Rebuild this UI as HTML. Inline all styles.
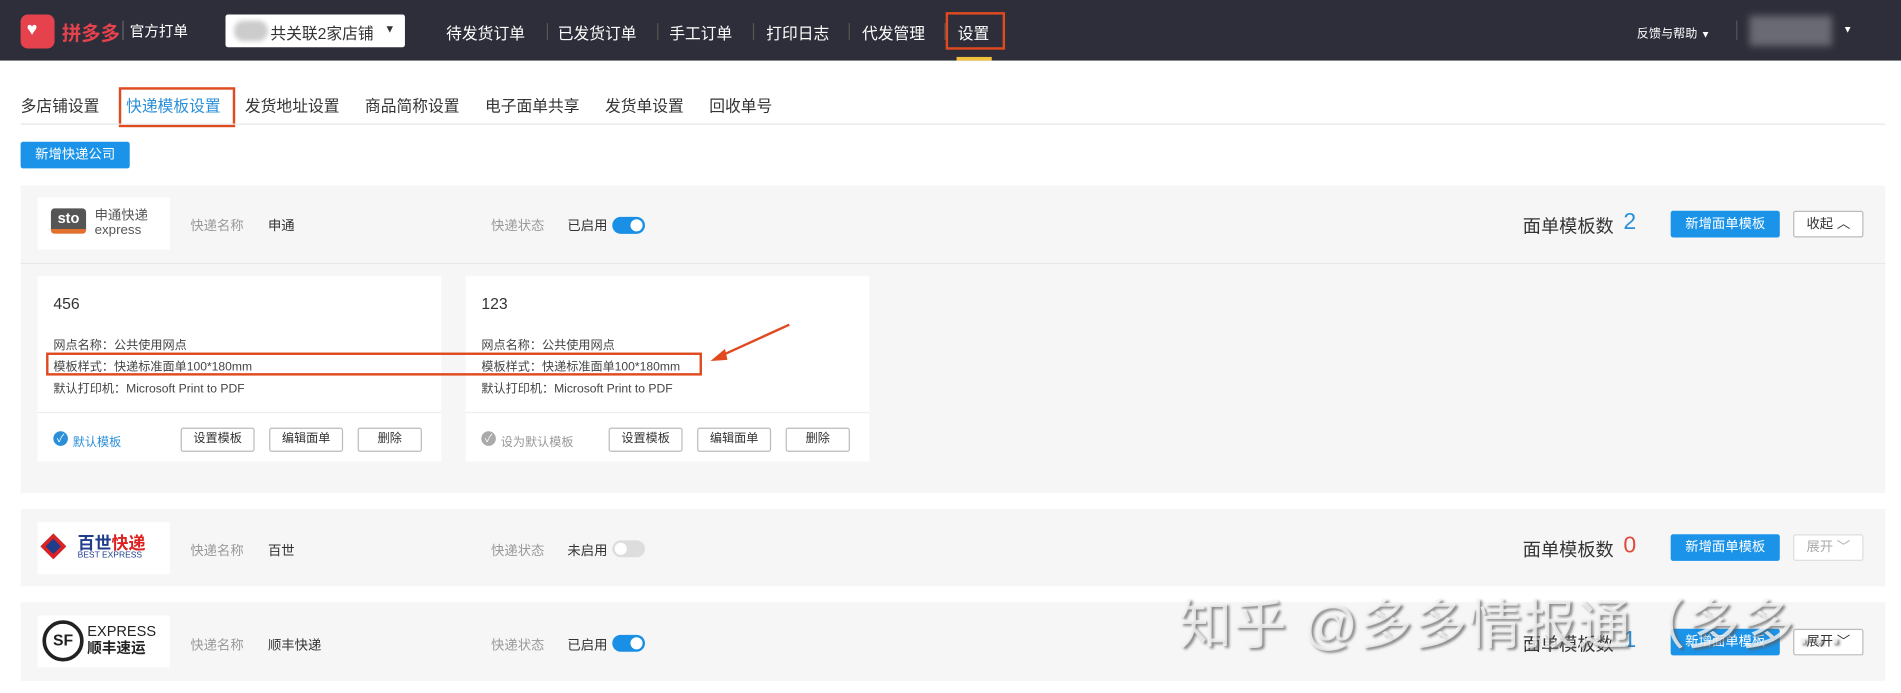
<!DOCTYPE html>
<html><head><meta charset="utf-8">
<style>
*{margin:0;padding:0;box-sizing:border-box}
html,body{width:1901px;height:693px;overflow:hidden;background:#fff}
body{font-family:"Liberation Sans","Noto Sans CJK SC",sans-serif;color:#333}
#w{position:absolute;left:0;top:0;width:1568px;height:572px;transform:scale(1.2124,1.2115);transform-origin:0 0}
.a{position:absolute;white-space:nowrap}
.hd{left:0;top:0;width:1568px;height:50px;background:#2e2e3a}
.nav{top:17px;font-size:13px;color:#fff}
.tab{top:77px;font-size:13px;color:#333}
.sec{left:17px;width:1538px;background:#f6f6f6}
.lg{background:#fff}
.lbl{font-size:11px;color:#999}
.val{font-size:11px;color:#333}
.tog{width:27px;height:14px;border-radius:7px;background:#1a8fe6}
.tog:after{content:"";position:absolute;right:2px;top:2px;width:10px;height:10px;border-radius:50%;background:#fff}
.tog.off{background:#ddd}.tog.off:after{left:2px;right:auto}
.bb{background:#1a93e8;color:#fff;font-size:11px;text-align:center;border-radius:2px}
.wb{background:#fff;border:1px solid #bbb;font-size:11px;text-align:center;color:#333;border-radius:2px}
.card{background:#fff;width:333px;height:153px}
.ln{font-size:10px;color:#444}
</style></head><body><div id="w">
<div class="a hd"></div>
<div class="a" style="left:17px;top:12px;width:28px;height:28px;background:#e5424d;border-radius:6px"></div>
<div class="a" style="left:22px;top:17px;width:18px;height:16px;color:#fff;font-size:15px;line-height:16px">♥</div>
<div class="a" style="left:51px;top:14px;font-size:16px;font-weight:bold;color:#e5424d">拼多多</div>
<div class="a" style="left:101px;top:17px;width:1px;height:16px;background:#666"></div>
<div class="a" style="left:107px;top:17px;font-size:12px;color:#fff">官方打单</div>
<div class="a" style="left:186px;top:12px;width:148px;height:27px;background:#fff;border-radius:2px"></div>
<div class="a" style="left:193px;top:17px;width:28px;height:17px;background:#ccc;border-radius:8px;filter:blur(2px)"></div>
<div class="a" style="left:223px;top:17px;font-size:13px;color:#333">共关联2家店铺</div>
<div class="a" style="left:317px;top:19px;font-size:9px;color:#333">▼</div>
<div class="a nav" style="left:368px">待发货订单</div>
<div class="a nav" style="left:460px">已发货订单</div>
<div class="a nav" style="left:552px">手工订单</div>
<div class="a nav" style="left:632px">打印日志</div>
<div class="a nav" style="left:711px">代发管理</div>
<div class="a nav" style="left:790px">设置</div>
<div class="a" style="left:451px;top:19px;width:1px;height:14px;background:#555"></div>
<div class="a" style="left:542px;top:19px;width:1px;height:14px;background:#555"></div>
<div class="a" style="left:621px;top:19px;width:1px;height:14px;background:#555"></div>
<div class="a" style="left:700px;top:19px;width:1px;height:14px;background:#555"></div>
<div class="a" style="left:779px;top:19px;width:1px;height:14px;background:#555"></div>
<div class="a" style="left:780px;top:10px;width:49px;height:31px;border:2px solid #e04a1f"></div>
<div class="a" style="left:789px;top:47px;width:29px;height:3px;background:#f3c23d"></div>
<div class="a" style="left:1350px;top:19px;font-size:10px;color:#fff">反馈与帮助 <span style="font-size:8px">▼</span></div>
<div class="a" style="left:1432px;top:17px;width:1px;height:16px;background:#555"></div>
<div class="a" style="left:1443px;top:13px;width:68px;height:25px;background:#6a6a74;filter:blur(3px)"></div>
<div class="a" style="left:1520px;top:20px;font-size:8px;color:#fff">▼</div>

<div class="a tab" style="left:17px">多店铺设置</div>
<div class="a tab" style="left:104px;color:#2a8fd8">快递模板设置</div>
<div class="a tab" style="left:202px">发货地址设置</div>
<div class="a tab" style="left:301px">商品简称设置</div>
<div class="a tab" style="left:400px">电子面单共享</div>
<div class="a tab" style="left:499px">发货单设置</div>
<div class="a tab" style="left:585px">回收单号</div>
<div class="a" style="left:98px;top:72px;width:96px;height:33px;border:2px solid #e04a1f"></div>
<div class="a" style="left:17px;top:102px;width:1538px;height:1px;background:#e6e6e6"></div>
<div class="a bb" style="left:17px;top:117px;width:90px;height:22px;line-height:22px">新增快递公司</div>

<div class="a sec" style="top:153px;height:254px"></div>
<div class="a" style="left:17px;top:217px;width:1538px;height:1px;background:#e8e8e8"></div>
<div class="a lg" style="left:31px;top:163px;width:109px;height:43px"></div>
<div class="a" style="left:42px;top:172px;width:29px;height:21px;background:#555;border-radius:3px;border-bottom:4px solid #e2702d;color:#fff;font-size:12px;font-weight:bold;text-align:center;line-height:16px">sto</div>
<div class="a" style="left:78px;top:172px;font-size:11px;color:#555;line-height:12px">申通快递<br><span style="font-size:11px">express</span></div>
<div class="a lbl" style="left:157px;top:178px">快递名称</div>
<div class="a val" style="left:221px;top:178px">申通</div>
<div class="a lbl" style="left:405px;top:178px">快递状态</div>
<div class="a val" style="left:468px;top:178px">已启用</div>
<div class="a tog" style="left:505px;top:179px"></div>
<div class="a" style="left:1256px;top:176px;font-size:15px;color:#333">面单模板数</div>
<div class="a" style="left:1339px;top:173px;font-size:19px;color:#2a8fd8">2</div>
<div class="a bb" style="left:1378px;top:174px;width:90px;height:22px;line-height:22px">新增面单模板</div>
<div class="a wb" style="left:1479px;top:174px;width:58px;height:22px;line-height:20px">收起 ︿</div>

<div class="a card" style="left:31px;top:228px"></div>
<div class="a card" style="left:384px;top:228px"></div>
<div class="a" style="left:31px;top:340px;width:333px;height:1px;background:#eee"></div>
<div class="a" style="left:384px;top:340px;width:333px;height:1px;background:#eee"></div>
<div class="a" style="left:44px;top:243px;font-size:13px;color:#333">456</div>
<div class="a" style="left:397px;top:243px;font-size:13px;color:#333">123</div>
<div class="a ln" style="left:44px;top:276px">网点名称：公共使用网点</div>
<div class="a ln" style="left:44px;top:294px">模板样式：快递标准面单100*180mm</div>
<div class="a ln" style="left:44px;top:312px">默认打印机：Microsoft Print to PDF</div>
<div class="a ln" style="left:397px;top:276px">网点名称：公共使用网点</div>
<div class="a ln" style="left:397px;top:294px">模板样式：快递标准面单100*180mm</div>
<div class="a ln" style="left:397px;top:312px">默认打印机：Microsoft Print to PDF</div>
<div class="a" style="left:38px;top:291px;width:541px;height:19px;border:2px solid #e04a1f"></div>
<svg class="a" style="left:580px;top:262px" width="80" height="42"><line x1="71" y1="6" x2="14" y2="32" stroke="#e04a1f" stroke-width="2"/><polygon points="6,36 18,26 20,35" fill="#e04a1f"/></svg>
<div class="a" style="left:44px;top:356px;width:12px;height:12px;border-radius:50%;background:#2a8fd8;color:#fff;font-size:9px;text-align:center;line-height:12px">✓</div>
<div class="a" style="left:60px;top:356px;font-size:10px;color:#2a8fd8">默认模板</div>
<div class="a" style="left:397px;top:356px;width:12px;height:12px;border-radius:50%;background:#aaa;color:#fff;font-size:9px;text-align:center;line-height:12px">✓</div>
<div class="a" style="left:413px;top:356px;font-size:10px;color:#999">设为默认模板</div>
<div class="a wb" style="left:149px;top:353px;width:61px;height:20px;line-height:18px;font-size:10px">设置模板</div>
<div class="a wb" style="left:222px;top:353px;width:61px;height:20px;line-height:18px;font-size:10px">编辑面单</div>
<div class="a wb" style="left:295px;top:353px;width:53px;height:20px;line-height:18px;font-size:10px">删除</div>
<div class="a wb" style="left:502px;top:353px;width:61px;height:20px;line-height:18px;font-size:10px">设置模板</div>
<div class="a wb" style="left:575px;top:353px;width:61px;height:20px;line-height:18px;font-size:10px">编辑面单</div>
<div class="a wb" style="left:648px;top:353px;width:53px;height:20px;line-height:18px;font-size:10px">删除</div>

<div class="a sec" style="top:420px;height:64px"></div>
<div class="a lg" style="left:31px;top:431px;width:109px;height:43px"></div>
<div class="a" style="left:34px;top:441px;width:20px;height:20px;background:#1f3d8a;transform:rotate(45deg) scale(.75);border:4px solid #d22"></div>
<div class="a" style="left:64px;top:438px;font-size:14px;color:#1f3d8a;font-weight:bold">百世<span style="color:#d22">快递</span></div>
<div class="a" style="left:64px;top:455px;font-size:7px;color:#1f3d8a">BEST EXPRESS</div>
<div class="a lbl" style="left:157px;top:446px">快递名称</div>
<div class="a val" style="left:221px;top:446px">百世</div>
<div class="a lbl" style="left:405px;top:446px">快递状态</div>
<div class="a val" style="left:468px;top:446px">未启用</div>
<div class="a tog off" style="left:505px;top:446px"></div>
<div class="a" style="left:1256px;top:443px;font-size:15px;color:#333">面单模板数</div>
<div class="a" style="left:1339px;top:440px;font-size:19px;color:#e04a3a">0</div>
<div class="a bb" style="left:1378px;top:441px;width:90px;height:22px;line-height:22px">新增面单模板</div>
<div class="a wb" style="left:1479px;top:441px;width:58px;height:22px;line-height:20px;color:#aaa;border-color:#ddd">展开 ﹀</div>

<div class="a sec" style="top:497px;height:65px"></div>
<div class="a lg" style="left:31px;top:508px;width:109px;height:43px"></div>
<div class="a" style="left:35px;top:512px;width:34px;height:34px;border:3px solid #222;border-radius:50%;font-size:13px;font-weight:bold;text-align:center;line-height:28px;color:#222">SF</div>
<div class="a" style="left:72px;top:514px;font-size:12px;color:#222;line-height:14px">EXPRESS<br><b>顺丰速运</b></div>
<div class="a lbl" style="left:157px;top:524px">快递名称</div>
<div class="a val" style="left:221px;top:524px">顺丰快递</div>
<div class="a lbl" style="left:405px;top:524px">快递状态</div>
<div class="a val" style="left:468px;top:524px">已启用</div>
<div class="a tog" style="left:505px;top:524px"></div>
<div class="a" style="left:1256px;top:521px;font-size:15px;color:#333">面单模板数</div>
<div class="a" style="left:1339px;top:518px;font-size:19px;color:#2a8fd8">1</div>
<div class="a bb" style="left:1378px;top:519px;width:90px;height:22px;line-height:22px">新增面单模板</div>
<div class="a wb" style="left:1479px;top:519px;width:58px;height:22px;line-height:20px">展开 ﹀</div>

<div class="a" style="left:972px;top:480px;font-size:44px;color:rgba(245,245,245,0.8);text-shadow:2px 2px 2px rgba(90,90,90,0.7);letter-spacing:1px">知乎 @多多情报通（多多...</div>
</div></body></html>
